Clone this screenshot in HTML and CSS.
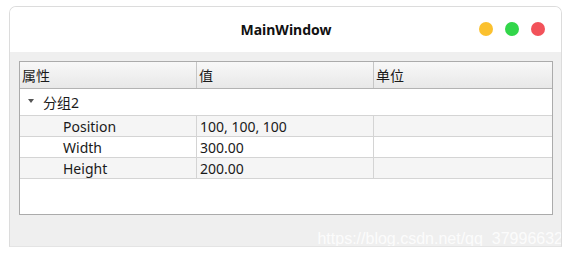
FILE: index.html
```html
<!DOCTYPE html>
<html>
<head>
<meta charset="utf-8">
<link rel="stylesheet" href="styles.css">
</head>
<body>
<div class="window">
  <div class="titlebar">
    <span></span>
    <span class="title">MainWindow</span>
    <div class="lights">
      <span class="light yellow"></span>
      <span class="light green"></span>
      <span class="light red"></span>
    </div>
  </div>
  <div class="content">
    <div class="tree">
      <div class="row header">
        <div class="cell">属性</div>
        <div class="cell">值</div>
        <div class="cell">单位</div>
      </div>
      <div class="group"><span class="arrow"></span><span>分组2</span></div>
      <div class="row prop alt">
        <div class="cell name">Position</div>
        <div class="cell">100, 100, 100</div>
        <div class="cell"></div>
      </div>
      <div class="row prop">
        <div class="cell name">Width</div>
        <div class="cell">300.00</div>
        <div class="cell"></div>
      </div>
      <div class="row prop alt">
        <div class="cell name">Height</div>
        <div class="cell">200.00</div>
        <div class="cell"></div>
      </div>
    </div>
    <div class="watermark">https://blog.csdn.net/qq_37996632</div>
  </div>
</div>
</body>
</html>
```

FILE: styles.css
```css
* { box-sizing: border-box; }
html, body { margin: 0; padding: 0; background: #ffffff; }
body {
  font-family: "Noto Sans", "Noto Sans CJK SC", sans-serif;
  font-size: 14px;
  color: #1a1a1a;
}
.window {
  margin: 6px 0 0 9px;
  width: 553px;
  height: 241px;
  border: 1px solid #dcdcdc;
  border-bottom-color: #e4e4e4;
  border-radius: 7px 7px 0 0;
  overflow: hidden;
  display: flex;
  flex-direction: column;
}
.titlebar {
  height: 45px;
  flex: none;
  background: #ffffff;
  display: grid;
  grid-template-columns: 1fr auto 1fr;
  align-items: center;
  padding: 0 16px 1px 17px;
}
.title {
  font-weight: bold;
  font-size: 14px;
  color: #111;
}
.lights {
  justify-self: end;
  display: flex;
  gap: 12px;
}
.light {
  width: 14px;
  height: 14px;
  border-radius: 50%;
  display: block;
}
.yellow { background: #fbc12f; }
.green { background: #32d64a; }
.red { background: #f2525a; }
.content {
  flex: 1;
  background: #efefef;
  padding: 9px 0 0 9px;
  position: relative;
}
.tree {
  width: 534px;
  height: 154px;
  border: 1px solid #ababab;
  background: #ffffff;
  display: flex;
  flex-direction: column;
}
.row {
  display: grid;
  grid-template-columns: 177px 177px 178px;
}
.header {
  height: 27px;
  background: linear-gradient(#f8f8f8, #e8e8e8);
  border-bottom: 1px solid #b3b3b3;
}
.header .cell {
  border-right: 1px solid #c6c6c6;
  padding: 0 0 0 2px;
  display: flex;
  align-items: center;
  font-family: "Noto Sans CJK SC", sans-serif;
  font-size: 14px;
  color: #1a1a1a;
}
.header .cell:last-child { border-right: none; }
.group {
  height: 27px;
  display: flex;
  align-items: center;
  padding-left: 8px;
  border-bottom: 1px solid #d4d4d4;
  font-family: "Noto Sans", "Noto Sans CJK SC", sans-serif;
}
.arrow {
  width: 0;
  height: 0;
  border-left: 3.5px solid transparent;
  border-right: 3.5px solid transparent;
  border-top: 4px solid #555;
  margin: 0 9px 2px 0;
}
.prop {
  height: 21px;
  border-bottom: 1px solid #d4d4d4;
}
.prop.alt { background: #f5f5f5; }
.prop .cell {
  border-right: 1px solid #d4d4d4;
  padding: 1px 0 0 3px;
  display: flex;
  align-items: center;
  line-height: 1;
}
.prop .cell:last-child { border-right: none; }
.prop .name { padding-left: 43px; }
.watermark {
  position: absolute;
  right: -2px;
  bottom: -2px;
  font-family: "Liberation Sans", Arial, sans-serif;
  font-size: 16px;
  color: rgba(255, 255, 255, 0.8);
  white-space: nowrap;
}
```
